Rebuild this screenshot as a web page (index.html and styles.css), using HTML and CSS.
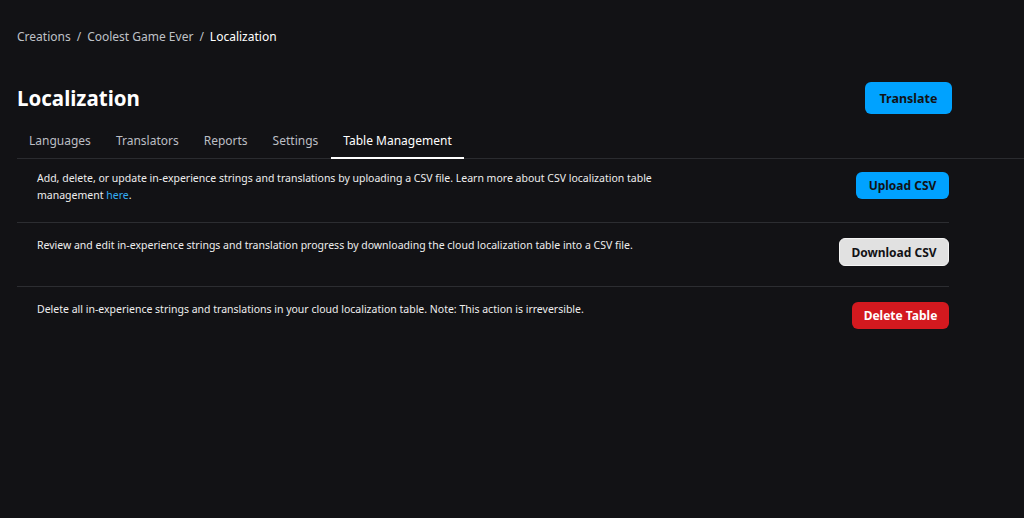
FILE: index.html
```html
<!DOCTYPE html>
<html lang="en">
<head>
<meta charset="utf-8">
<title>Localization</title>
<link rel="stylesheet" href="styles.css">
</head>
<body>
<div class="page">
  <nav class="crumbs">
    <span class="crumb">Creations</span>
    <span class="sep">/</span>
    <span class="crumb">Coolest Game Ever</span>
    <span class="sep">/</span>
    <span class="crumb current">Localization</span>
  </nav>
  <header class="head">
    <h1 class="title">Localization</h1>
    <button class="btn btn-blue btn-lg">Translate</button>
  </header>
  <div class="tabs">
    <div class="tab">Languages</div>
    <div class="tab">Translators</div>
    <div class="tab">Reports</div>
    <div class="tab">Settings</div>
    <div class="tab active">Table Management</div>
  </div>
  <section class="rows">
    <div class="row">
      <p class="desc">Add, delete, or update in-experience strings and translations by uploading a CSV file. Learn more about CSV localization table management <a class="link" href="#">here</a>.</p>
      <button class="btn btn-blue">Upload CSV</button>
    </div>
    <div class="row">
      <p class="desc">Review and edit in-experience strings and translation progress by downloading the cloud localization table into a CSV file.</p>
      <button class="btn btn-light">Download CSV</button>
    </div>
    <div class="row last">
      <p class="desc">Delete all in-experience strings and translations in your cloud localization table. Note: This action is irreversible.</p>
      <button class="btn btn-red">Delete Table</button>
    </div>
  </section>
</div>
</body>
</html>
```

FILE: styles.css
```css
html, body {
  margin: 0;
  padding: 0;
  background: #121215;
  color: #f2f2f2;
  font-family: "Noto Sans", "Open Sans", sans-serif;
}
.page {
  padding-left: 17px;
}
.crumbs {
  display: flex;
  align-items: center;
  gap: 6px;
  height: 18px;
  margin-top: 27px;
  font-size: 12px;
  color: #bfc1c7;
}
.crumb.current { color: #ffffff; }
.head {
  display: flex;
  justify-content: space-between;
  align-items: center;
  width: 935px;
  margin-top: 37px;
  height: 32px;
}
.title {
  margin: 0;
  font-size: 20.5px;
  font-weight: 700;
  color: #ffffff;
}
.btn {
  border: 0;
  border-radius: 6px;
  font-family: inherit;
  font-weight: 700;
  font-size: 12px;
  color: #121215;
  padding: 0;
  height: 27px;
  cursor: pointer;
}
.btn-lg {
  height: 32px;
  width: 87px;
  font-size: 12.5px;
  border-radius: 6px;
}
.btn-blue { background: #00a2ff; }
.btn-light {
  background: #e1e1e1;
  border: 1px solid #f4f4f4;
  height: 28px;
  width: 110px;
}
.btn-red {
  background: #d3191f;
  color: #ffffff;
  width: 97px;
}
.rows .btn-blue { width: 93px; }
.tabs {
  display: flex;
  margin-top: 8px;
  border-bottom: 1px solid #2a2b2f;
  height: 36px;
}
.tab {
  padding: 2px 12px 0;
  margin-right: 1px;
  display: flex;
  align-items: center;
  font-size: 12px;
  color: #bcbec4;
  border-bottom: 2px solid transparent;
  margin-bottom: -1px;
}
.tab.active {
  color: #ffffff;
  border-bottom-color: #ffffff;
}
.rows {
  width: 932px;
}
.row {
  display: flex;
  justify-content: space-between;
  align-items: flex-start;
  box-sizing: border-box;
  height: 64px;
  padding: 14px 0 0 20px;
  border-bottom: 1px solid #2c2d31;
}
.row .btn { margin-top: 1px; }
.row:first-child {
  padding-top: 11px;
}
.row:first-child .btn { margin-top: 2px; }
.row.last { border-bottom: 0; }
.desc {
  margin: 0;
  width: 660px;
  font-size: 10.5px;
  line-height: 17px;
  color: #eeeeee;
}
.link {
  color: #33adf2;
  text-decoration: none;
}
```
